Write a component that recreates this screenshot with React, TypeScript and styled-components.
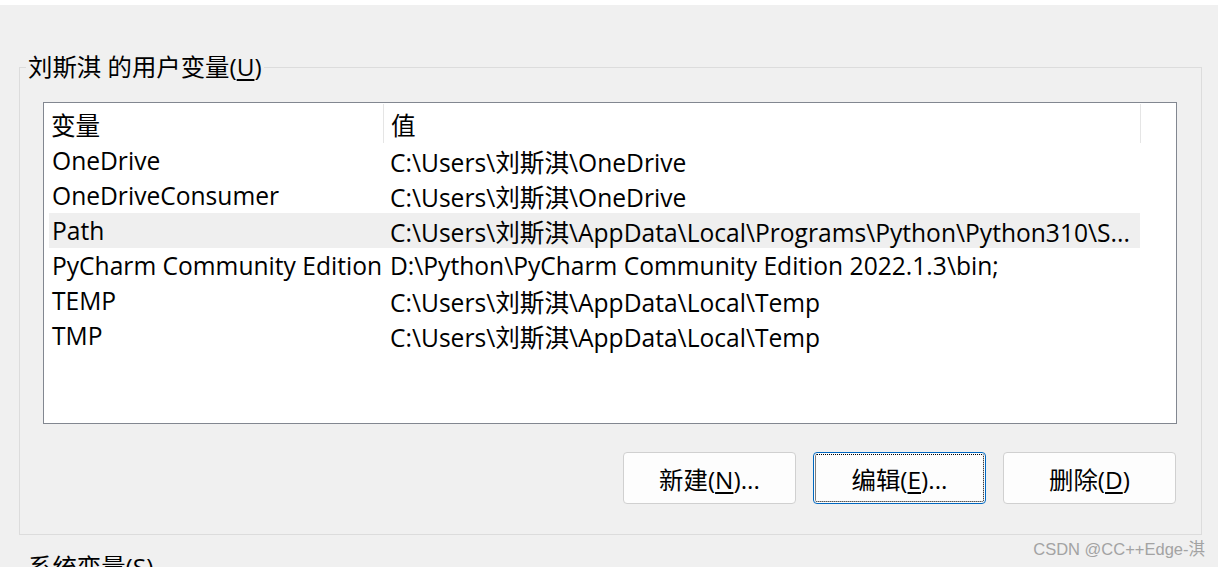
import React from "react";
import styled, { createGlobalStyle } from "styled-components";

const GlobalStyle = createGlobalStyle`
  html, body {
    margin: 0;
    padding: 0;
    background: #ffffff;
  }
  body {
    font-family: "Segoe UI", "Open Sans", "Noto Sans CJK SC", sans-serif;
    color: #000;
  }
`;

const Window = styled.div`
  position: relative;
  width: 1218px;
  height: 562px;
  margin-top: 5px;
  background: #f0f0f0;
  overflow: hidden;
  padding-left: 19px;
  box-sizing: border-box;
`;

const Group = styled.fieldset<{ $gap: number }>`
  margin: ${(p) => p.$gap}px 0 0 0;
  width: 1183px;
  min-width: 0;
  box-sizing: border-box;
  border: 1px solid #dcdcdc;
  padding: 0;
`;

const Legend = styled.legend`
  margin-left: 6px;
  padding: 0 2px;
  font-size: 24.4px;
  line-height: 30px;
  color: #000;
`;

const GroupBody = styled.div`
  padding: 20px 24px 30px 23px;
`;

const ListBox = styled.div`
  height: 322px;
  box-sizing: border-box;
  border: 1px solid #828790;
  background: #ffffff;
  font-size: 24.6px;
`;

const HeaderRow = styled.div`
  display: grid;
  grid-template-columns: 340px 757px;
  height: 40px;
`;

const HeaderCell = styled.div`
  display: flex;
  align-items: center;
  margin-top: 1px;
  padding: 1px 0 0 7px;
  border-right: 1px solid #e5e5e5;
  box-sizing: border-box;
`;

const Row = styled.div<{ $selected?: boolean }>`
  display: grid;
  grid-template-columns: 334px 757px;
  width: 1091px;
  height: 35px;
  margin-left: 5px;
  align-items: center;
  background: ${(p) => (p.$selected ? "#efefef" : "transparent")};
`;

const NameCell = styled.div`
  padding-left: 3px;
  white-space: nowrap;
  overflow: hidden;
`;

const ValueCell = styled.div`
  padding-left: 7px;
  white-space: nowrap;
  overflow: hidden;
`;

const ButtonRow = styled.div`
  display: flex;
  justify-content: flex-end;
  gap: 17px;
  margin-top: 28px;
  padding-right: 1px;
`;

const Button = styled.button<{ $focused?: boolean }>`
  width: 173px;
  height: 52px;
  box-sizing: border-box;
  border-radius: 4px;
  background: #fdfdfd;
  border: 1px solid ${(p) => (p.$focused ? "#0067c0" : "#d0d0d0")};
  outline: ${(p) => (p.$focused ? "1px dotted #000" : "none")};
  outline-offset: -3px;
  font-family: inherit;
  font-size: 24.4px;
  color: #000;
  padding: 0;
`;

const Key = styled.u`
  text-underline-offset: 3px;
`;

const Watermark = styled.div`
  position: absolute;
  right: 13px;
  top: 531px;
  font-family: "Liberation Sans", "Noto Sans CJK SC", sans-serif;
  font-size: 16.5px;
  color: #a3a3a3;
  white-space: nowrap;
`;

const rows = [
  { name: "OneDrive", value: "C:\\Users\\刘斯淇\\OneDrive" },
  { name: "OneDriveConsumer", value: "C:\\Users\\刘斯淇\\OneDrive" },
  {
    name: "Path",
    value: "C:\\Users\\刘斯淇\\AppData\\Local\\Programs\\Python\\Python310\\S...",
    selected: true,
  },
  {
    name: "PyCharm Community Edition",
    value: "D:\\Python\\PyCharm Community Edition 2022.1.3\\bin;",
  },
  { name: "TEMP", value: "C:\\Users\\刘斯淇\\AppData\\Local\\Temp" },
  { name: "TMP", value: "C:\\Users\\刘斯淇\\AppData\\Local\\Temp" },
];

export default function App() {
  return (
    <>
      <GlobalStyle />
      <Window>
        <Group $gap={47}>
          <Legend>
            刘斯淇 的用户变量(<Key>U</Key>)
          </Legend>
          <GroupBody>
            <ListBox>
              <HeaderRow>
                <HeaderCell>变量</HeaderCell>
                <HeaderCell>值</HeaderCell>
              </HeaderRow>
              {rows.map((r) => (
                <Row key={r.name} $selected={r.selected}>
                  <NameCell>{r.name}</NameCell>
                  <ValueCell>{r.value}</ValueCell>
                </Row>
              ))}
            </ListBox>
            <ButtonRow>
              <Button>
                新建(<Key>N</Key>)...
              </Button>
              <Button $focused>
                编辑(<Key>E</Key>)...
              </Button>
              <Button>
                删除(<Key>D</Key>)
              </Button>
            </ButtonRow>
          </GroupBody>
        </Group>
        <Group $gap={17}>
          <Legend>
            系统变量(<Key>S</Key>)
          </Legend>
          <GroupBody />
        </Group>
        <Watermark>CSDN @CC++Edge-淇</Watermark>
      </Window>
    </>
  );
}
